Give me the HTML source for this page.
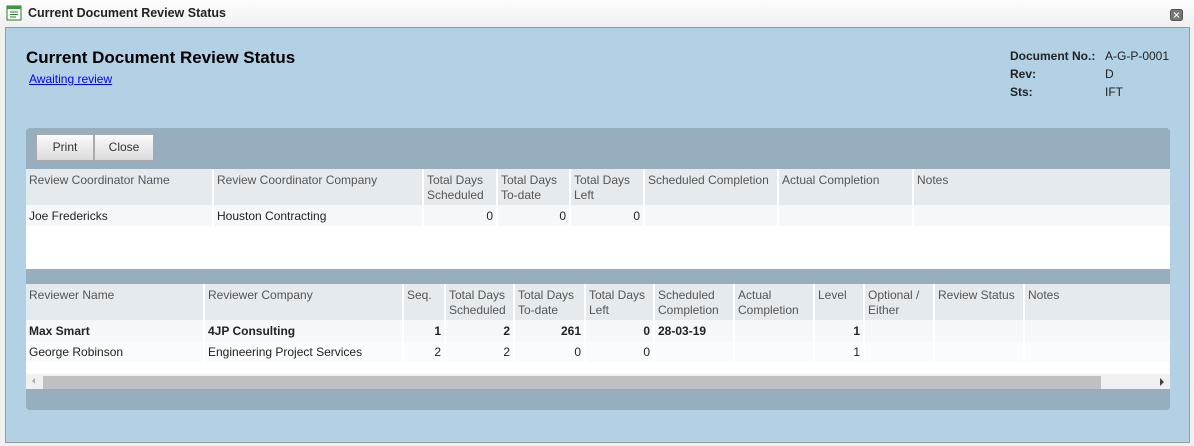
<!DOCTYPE html>
<html><head><style>
*{margin:0;padding:0;box-sizing:border-box}
body{width:1194px;height:446px;background:#f0f0f0;font-family:"Liberation Sans",sans-serif;font-size:12px;color:#222;position:relative;overflow:hidden}
.tb{position:absolute;left:0;top:0;width:1194px;height:27px;background:linear-gradient(#fdfdfd,#f0f0f0)}
.tb .t{position:absolute;left:28px;top:6px;font-weight:bold;font-size:12.5px;color:#222}
.body{position:absolute;left:5px;top:27px;width:1185px;height:416px;border:1px solid #999;background:#b3d1e4}
.a{position:absolute}
.panel{position:absolute;left:26px;top:128px;width:1144px;height:282px;background:#97aebe;border-radius:4px}
table{border-collapse:collapse;table-layout:fixed;position:absolute;left:26px}
td{padding:4px 3px 2px;vertical-align:top;border-right:2px solid #fff;white-space:nowrap;overflow:hidden;line-height:15px}
td:last-child{border-right:0}
tr.h td{background:#e5eaee;color:#555;height:35px}
tr.r td{background:#f4f8fb;height:21px}
tr.r2 td{background:#fafbfc;height:20px}
.n{text-align:right}
.b td{font-weight:bold}
.btn{position:absolute;top:134px;height:27px;border:1px solid #aaa;background:linear-gradient(#fafafa,#dcdcdc);color:#333;text-align:center;line-height:25px}
</style></head><body>
<div class="tb">
<svg class="a" style="left:6px;top:5px" width="16" height="16"><rect x="1" y="1" width="14" height="14" fill="#fff" stroke="#2a7a2a"/><rect x="1" y="1" width="14" height="3" fill="#3c9a3c"/><path d="M4 7h8M4 9.5h8M4 12h6" stroke="#2a7a2a"/></svg>
<div class="t">Current Document Review Status</div>
<svg class="a" style="left:1170px;top:9px" width="13" height="12"><rect x="0.5" y="0.5" width="12" height="11" rx="2" fill="#777" stroke="#555"/><path d="M4 3.5l5 5M9 3.5l-5 5" stroke="#fff"/></svg>
</div>
<div class="body"></div>
<div class="a" style="left:26px;top:48px;font-weight:bold;font-size:17px;color:#000">Current Document Review Status</div>
<div class="a" style="left:29px;top:72px;color:#00f;text-decoration:underline">Awaiting review</div>
<div class="a" style="left:1010px;top:47px;font-weight:bold;line-height:18px">Document No.:<br>Rev:<br>Sts:</div>
<div class="a" style="left:1105px;top:47px;line-height:18px">A-G-P-0001<br>D<br>IFT</div>
<div class="panel"></div>
<div class="btn" style="left:36px;width:58px">Print</div>
<div class="btn" style="left:94px;width:60px">Close</div>
<div class="a" style="left:26px;top:225px;width:1144px;height:44px;background:#fff"></div>
<table style="top:169px;width:1144px">
<colgroup><col width="187"><col width="210"><col width="74"><col width="73"><col width="74"><col width="134"><col width="135"><col width="257"></colgroup>
<tr class="h"><td>Review Coordinator Name</td><td>Review Coordinator Company</td><td>Total Days<br>Scheduled</td><td>Total Days<br>To-date</td><td>Total Days<br>Left</td><td>Scheduled Completion</td><td>Actual Completion</td><td>Notes</td></tr>
<tr class="r"><td>Joe Fredericks</td><td>Houston Contracting</td><td class="n">0</td><td class="n">0</td><td class="n">0</td><td></td><td></td><td></td></tr>
</table>
<div class="a" style="left:26px;top:360px;width:1144px;height:14px;background:#fff"></div>
<table style="top:284px;width:1144px">
<colgroup><col width="178"><col width="199"><col width="42"><col width="69"><col width="71"><col width="69"><col width="80"><col width="80"><col width="50"><col width="70"><col width="90"><col width="146"></colgroup>
<tr class="h"><td>Reviewer Name</td><td>Reviewer Company</td><td>Seq.</td><td>Total Days<br>Scheduled</td><td>Total Days<br>To-date</td><td>Total Days<br>Left</td><td>Scheduled<br>Completion</td><td>Actual<br>Completion</td><td>Level</td><td>Optional /<br>Either</td><td>Review Status</td><td>Notes</td></tr>
<tr class="r b"><td>Max Smart</td><td>4JP Consulting</td><td class="n">1</td><td class="n">2</td><td class="n">261</td><td class="n">0</td><td>28-03-19</td><td></td><td class="n">1</td><td></td><td></td><td></td></tr>
<tr class="r2"><td>George Robinson</td><td>Engineering Project Services</td><td class="n">2</td><td class="n">2</td><td class="n">0</td><td class="n">0</td><td></td><td></td><td class="n">1</td><td></td><td></td><td></td></tr>
</table>
<div class="a" style="left:26px;top:374px;width:1144px;height:15px;background:#f0f0f0"></div>
<div class="a" style="left:43px;top:376px;width:1058px;height:13px;background:#c0c0c0"></div>
<div class="a" style="left:32px;top:378px;width:0;height:0;border:3px solid transparent;border-right:3px solid #aaa;border-left:0"></div>
<div class="a" style="left:1160px;top:378px;width:0;height:0;border:4px solid transparent;border-left:4px solid #444;border-right:0"></div>
</body></html>
